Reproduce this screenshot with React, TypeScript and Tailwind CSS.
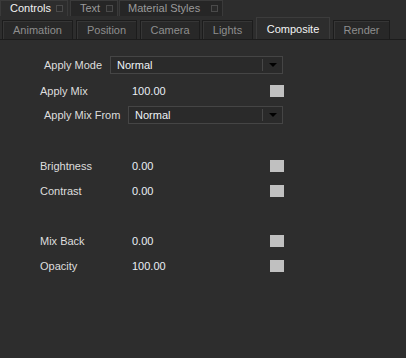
import React from 'react';

const font = { fontFamily: '"Liberation Sans", Arial, sans-serif' };

function TopTab({ label, active, w, textPl }: { label: string; active?: boolean; w: number; textPl: number }) {
  return (
    <div
      className={`relative flex h-[16px] items-center border border-b-0 ${active ? 'border-[#3a3a3a] bg-[#2d2d2d] text-[#f2f2f2]' : 'border-[#3a3a3a] bg-[#262626] text-[#9a9a9a]'}`}
      style={{ width: w }}
    >
      <span className="leading-none" style={{ paddingLeft: textPl }}>{label}</span>
      <span className="absolute right-[4px] top-[4px] h-[7px] w-[7px] border border-[#4a4a4a] bg-[#2a2a2a]" />
    </div>
  );
}

function SubTab({ label, active, w }: { label: string; active?: boolean; w: number }) {
  return (
    <div
      className={`flex items-center justify-center border border-b-0 pt-[1px] ${active ? 'h-[22px] border-[#3c3c3c] bg-[#2d2d2d] text-[#f4f4f4]' : 'h-[19px] border-[#1c1c1c] bg-[#282828] text-[#8e8e8e] shadow-[inset_1px_1px_0_#363636]'}`}
      style={{ width: w }}
    >
      {label}
    </div>
  );
}

function Dropdown({ w }: { w: number }) {
  return (
    <div className="flex h-[18px] items-center border border-[#454545] bg-[#2a2a2a]" style={{ width: w }}>
      <span className="flex-1 pl-[6px] text-[#eef2f6]">Normal</span>
      <span className="h-[12px] w-px bg-[#474747]" />
      <span className="flex w-[19px] justify-center">
        <span className="h-0 w-0 border-x-[4px] border-t-[4px] border-x-transparent border-t-black" />
      </span>
    </div>
  );
}

function ValueRow({ label, value, mt }: { label: string; value: string; mt: number }) {
  return (
    <div className="flex h-[12px] items-center" style={{ marginTop: mt }}>
      <span className="ml-[40px] w-[92px] text-[#dedede]">{label}</span>
      <span className="w-[138px] text-[#e9eff5]">{value}</span>
      <span className="h-[12px] w-[14px] bg-[#c0c0c0]" />
    </div>
  );
}

export default function App() {
  return (
    <div className="h-[358px] w-[406px] overflow-hidden bg-[#2d2d2d] text-[11px]" style={font}>
      {/* top tabs */}
      <div className="flex h-[18px] items-start">
        <TopTab label="Controls" active w={68} textPl={9} />
        <div className="w-[2px]" />
        <TopTab label="Text" w={48} textPl={9} />
        <div className="w-[1px]" />
        <TopTab label="Material Styles" w={104} textPl={8} />
      </div>

      {/* sub tabs */}
      <div className="flex h-[22px] items-end border-b border-[#1c1c1c] pl-[2px]">
        <SubTab label="Animation" w={71} />
        <div className="w-[3px]" />
        <SubTab label="Position" w={61} />
        <div className="w-[3px]" />
        <SubTab label="Camera" w={60} />
        <div className="w-[2px]" />
        <SubTab label="Lights" w={51} />
        <div className="w-[3px]" />
        <SubTab label="Composite" active w={74} />
        <div className="w-[3px]" />
        <SubTab label="Render" w={57} />
      </div>

      {/* content */}
      <div className="flex flex-col pt-[16px]">
        <div className="flex h-[18px] items-center">
          <span className="box-content w-[66px] whitespace-nowrap pl-[44px] text-[#dedede]">Apply Mode</span>
          <Dropdown w={173} />
        </div>
        <ValueRow label="Apply Mix" value="100.00" mt={11} />
        <div className="mt-[9px] flex h-[18px] items-center">
          <span className="box-content w-[84px] whitespace-nowrap pl-[44px] text-[#dedede]">Apply Mix From</span>
          <Dropdown w={155} />
        </div>
        <ValueRow label="Brightness" value="0.00" mt={36} />
        <ValueRow label="Contrast" value="0.00" mt={13} />
        <ValueRow label="Mix Back" value="0.00" mt={38} />
        <ValueRow label="Opacity" value="100.00" mt={13} />
      </div>
    </div>
  );
}
